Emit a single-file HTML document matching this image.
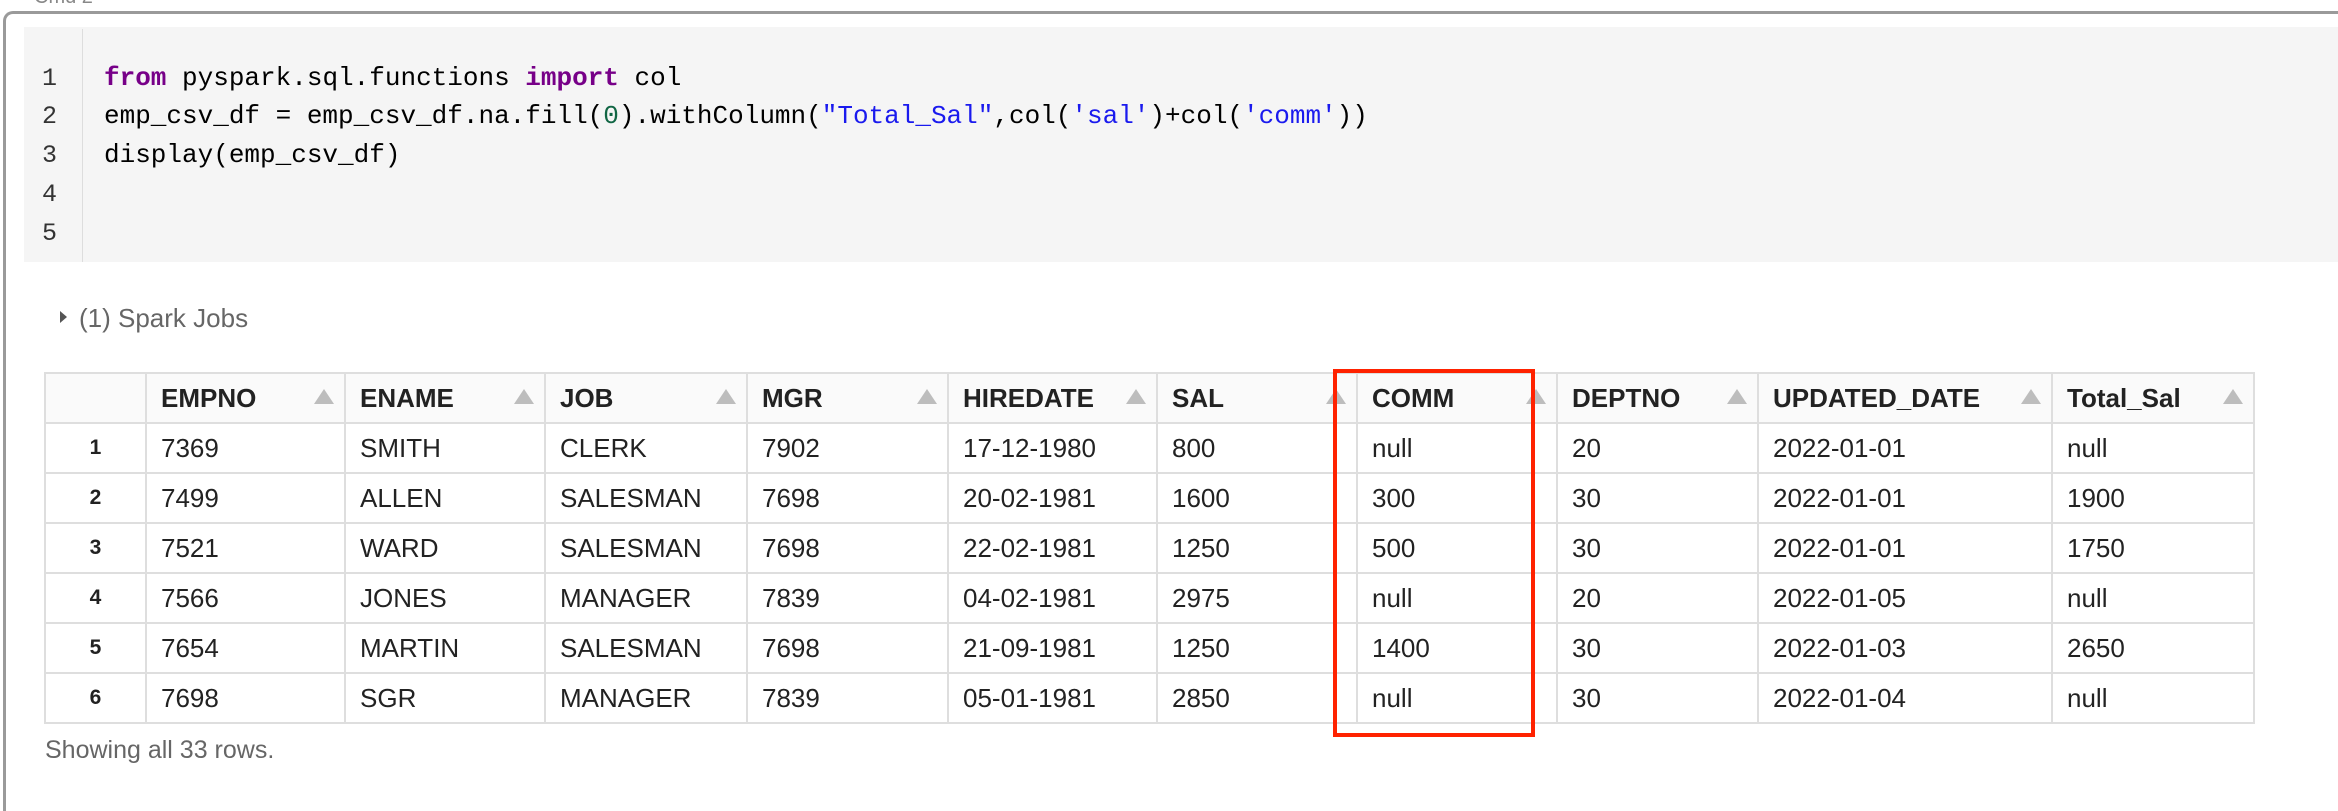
<!DOCTYPE html>
<html><head><meta charset="utf-8"><style>
*{margin:0;padding:0;box-sizing:border-box}
body{width:2338px;height:774px;background:#fff;position:relative;overflow:hidden;font-family:"Liberation Sans",sans-serif;color:#222}
.cmd{position:absolute;left:34px;top:-14px;font-size:20px;color:#888}
.cell{position:absolute;left:3px;top:11px;width:2400px;height:800px;border:3px solid #9a9a9a;border-right:none;border-bottom:none;border-top-left-radius:10px}
.code{position:absolute;left:24px;top:27px;width:2314px;height:235px;background:#f5f5f5}
.gut{position:absolute;left:82px;top:29px;width:1px;height:233px;background:#ddd}
.ln{position:absolute;left:42px;font-family:"Liberation Mono",monospace;font-size:25px;color:#333;line-height:30px}
.cl{position:absolute;left:104px;font-family:"Liberation Mono",monospace;font-size:26px;color:#000;white-space:pre;line-height:30px}
.k{color:#770088;font-weight:bold}.n{color:#116644}.s{color:#1a1aee}
.jobs{position:absolute;left:60px;top:303px;font-size:26px;color:#666}
.jobs i{display:inline-block;width:0;height:0;border-left:7px solid #555;border-top:6px solid transparent;border-bottom:6px solid transparent;margin-right:12px;vertical-align:4px}
table{position:absolute;left:44px;top:372px;border-collapse:collapse;font-size:26px}
td,th{border:2px solid #dedede;height:50px;padding:0 0 0 14px;text-align:left;white-space:nowrap;position:relative;color:#222}
th{background:#fafafa;font-weight:bold}
th:after{content:"";position:absolute;right:10px;top:15px;border-bottom:15px solid #bdbdbd;border-left:10px solid transparent;border-right:10px solid transparent}
th.e:after{display:none}
td.i{text-align:center;padding:0;font-weight:bold;font-size:21px}
.red{position:absolute;left:1333px;top:369px;width:202px;height:368px;border:4px solid #ff2200}
.show{position:absolute;left:45px;top:736px;font-size:25px;color:#666}
</style></head><body>
<div class="cmd">Cmd 2</div>
<div class="cell"></div>
<div class="code"></div>
<div class="gut"></div>
<div class="ln" style="top:64px">1</div>
<div class="ln" style="top:102px">2</div>
<div class="ln" style="top:141px">3</div>
<div class="ln" style="top:180px">4</div>
<div class="ln" style="top:219px">5</div>
<div class="cl" style="top:63px"><span class="k">from</span> pyspark.sql.functions <span class="k">import</span> col</div>
<div class="cl" style="top:101px">emp_csv_df = emp_csv_df.na.fill(<span class="n">0</span>).withColumn(<span class="s">"Total_Sal"</span>,col(<span class="s">'sal'</span>)+col(<span class="s">'comm'</span>))</div>
<div class="cl" style="top:140px">display(emp_csv_df)</div>
<div class="jobs"><i></i>(1) Spark Jobs</div>
<table>
<colgroup><col style="width:101px"><col style="width:199px"><col style="width:200px"><col style="width:202px"><col style="width:201px"><col style="width:209px"><col style="width:200px"><col style="width:200px"><col style="width:201px"><col style="width:294px"><col style="width:202px"></colgroup>
<tr><th class="e"></th><th>EMPNO</th><th>ENAME</th><th>JOB</th><th>MGR</th><th>HIREDATE</th><th>SAL</th><th>COMM</th><th>DEPTNO</th><th>UPDATED_DATE</th><th>Total_Sal</th></tr>
<tr><td class="i">1</td><td>7369</td><td>SMITH</td><td>CLERK</td><td>7902</td><td>17-12-1980</td><td>800</td><td>null</td><td>20</td><td>2022-01-01</td><td>null</td></tr>
<tr><td class="i">2</td><td>7499</td><td>ALLEN</td><td>SALESMAN</td><td>7698</td><td>20-02-1981</td><td>1600</td><td>300</td><td>30</td><td>2022-01-01</td><td>1900</td></tr>
<tr><td class="i">3</td><td>7521</td><td>WARD</td><td>SALESMAN</td><td>7698</td><td>22-02-1981</td><td>1250</td><td>500</td><td>30</td><td>2022-01-01</td><td>1750</td></tr>
<tr><td class="i">4</td><td>7566</td><td>JONES</td><td>MANAGER</td><td>7839</td><td>04-02-1981</td><td>2975</td><td>null</td><td>20</td><td>2022-01-05</td><td>null</td></tr>
<tr><td class="i">5</td><td>7654</td><td>MARTIN</td><td>SALESMAN</td><td>7698</td><td>21-09-1981</td><td>1250</td><td>1400</td><td>30</td><td>2022-01-03</td><td>2650</td></tr>
<tr><td class="i">6</td><td>7698</td><td>SGR</td><td>MANAGER</td><td>7839</td><td>05-01-1981</td><td>2850</td><td>null</td><td>30</td><td>2022-01-04</td><td>null</td></tr>
</table>
<div class="red"></div>
<div class="show">Showing all 33 rows.</div>
</body></html>
